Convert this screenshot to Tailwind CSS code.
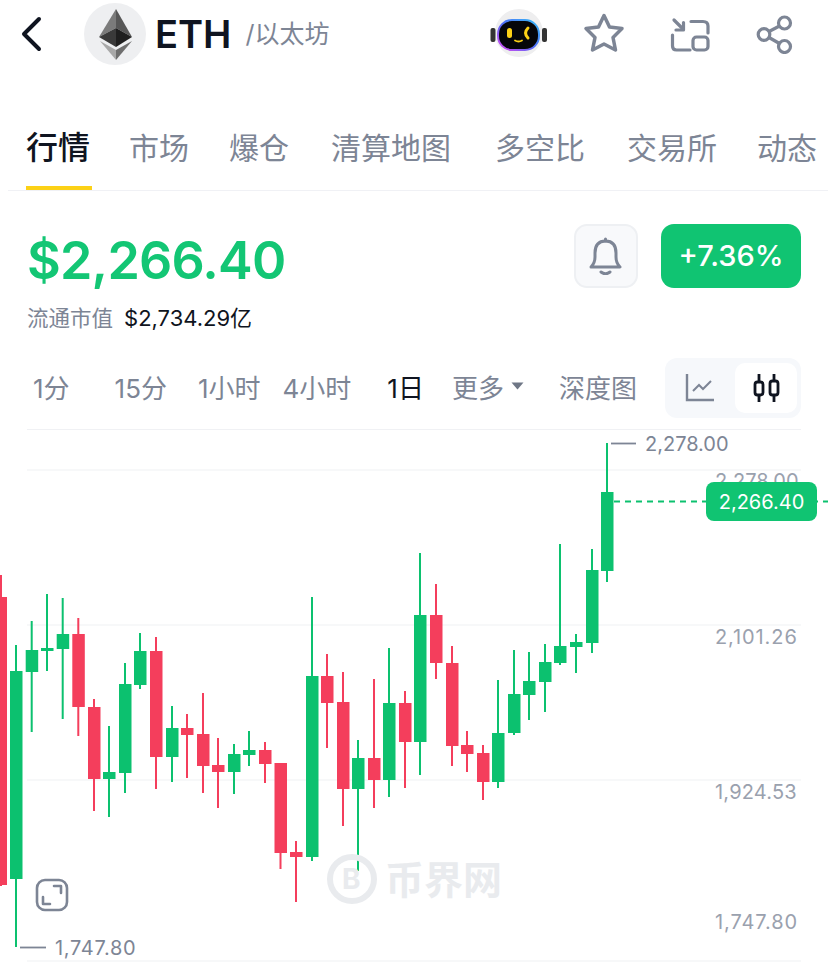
<!DOCTYPE html>
<html lang="zh">
<head>
<meta charset="utf-8">
<script src="https://cdn.jsdelivr.net/npm/@tailwindcss/browser@4"></script>
</head>
<body class="m-0 bg-white">
<div class="w-[828px] h-[967px] overflow-hidden bg-white font-['Inter','Noto_Sans_CJK_SC',sans-serif]">

  <!-- header -->
  <header class="h-[68px] flex items-center">
    <svg class="ml-[18px] w-[26px] h-[36px]" viewBox="0 0 26 36" fill="none" stroke="#0f1420" stroke-width="4" stroke-linecap="round" stroke-linejoin="round"><path d="M21 3 L6 18 L21 33"/></svg>
    <svg class="ml-[40px] w-[62px] h-[62px]" viewBox="84 3 62 62">
      <circle cx="115" cy="34" r="31" fill="#eeeff1"/>
      <path d="M116 9 L99 37 L116 28Z" fill="#7b7b7b"/>
      <path d="M116 9 L132 37 L116 28Z" fill="#575757"/>
      <path d="M99 37 L116 28 L116 47Z" fill="#3a3a3a"/>
      <path d="M132 37 L116 28 L116 47Z" fill="#1f1f1f"/>
      <path d="M100 41 L116 50 L116 60Z" fill="#a8a8a8"/>
      <path d="M132 41 L116 50 L116 60Z" fill="#6e6e6e"/>
    </svg>
    <span class="ml-[9px] text-[38px] leading-none font-semibold text-[#0f1420]">ETH</span>
    <span class="ml-[14px] text-[25px] leading-none text-[#7d8595]">/以太坊</span>
    <svg class="ml-[161px] w-[58px] h-[50px]" viewBox="491 9 58 50">
      <circle cx="520" cy="33" r="24" fill="#eeeeef"/>
      <rect x="491.500" y="28" width="5" height="14" rx="2" fill="#333"/>
      <rect x="543" y="28" width="5" height="14" rx="2" fill="#333"/>
      <defs><linearGradient id="rb" x1="1" y1="0" x2="0" y2="1"><stop offset="0" stop-color="#38bdf8"/><stop offset="0.5" stop-color="#4f6df5"/><stop offset="1" stop-color="#d946ef"/></linearGradient></defs>
      <rect x="499" y="20" width="41" height="30" rx="14" fill="#05060a" stroke="url(#rb)" stroke-width="2"/>
      <rect x="508" y="28" width="5" height="10" rx="2.500" fill="#fcd116"/>
      <path d="M529 28 Q524 33 529 38" fill="none" stroke="#fcd116" stroke-width="3" stroke-linecap="round"/>
      <path d="M516 40.500 Q519.500 42.500 523 40.500" fill="none" stroke="#fcd116" stroke-width="1.800" stroke-linecap="round"/>
    </svg>
    <svg class="ml-[35px] w-[42px] h-[42px]" viewBox="584 14 42 42" fill="none" stroke="#7d8595" stroke-width="3.500" stroke-linejoin="round"><path d="M605 16.500 L610.500 28 L623 29.500 L614 38.500 L616.500 51 L605 45 L593.500 51 L596 38.500 L587 29.500 L599.500 28Z"/></svg>
    <svg class="ml-[44px] w-[42px] h-[38px]" viewBox="668 15 42 38" fill="none" stroke="#7d8595" stroke-width="3.200" stroke-linecap="round" stroke-linejoin="round">
      <path d="M673 20 L682 29"/><path d="M682.500 22.500 V30 H675"/>
      <path d="M671.500 35 V46 Q671.500 50 675.500 50 H689"/>
      <path d="M690 21.500 H702 Q707 21.500 707 26 V33"/>
      <rect x="692" y="37" width="15" height="13" rx="3.500"/>
    </svg>
    <svg class="ml-[45px] w-[38px] h-[40px]" viewBox="755 14 38 40" fill="none" stroke="#7d8595" stroke-width="3.200">
      <circle cx="783.500" cy="23" r="6"/><circle cx="763" cy="34.500" r="5.800"/><circle cx="783.500" cy="46.500" r="6"/>
      <path d="M768 31.500 L778.500 26"/><path d="M768 37.500 L778.500 43.500"/>
    </svg>
  </header>

  <!-- tabs -->
  <nav class="ml-[8px] h-[123px] border-b border-[#f0f1f5] flex items-start pt-[59px] pl-[18px] text-[#7d8595] text-[30px] leading-[42px] whitespace-nowrap relative">
    <span class="relative w-[66px] h-[63px] font-medium text-[32px] text-[#0f1420]">行情<i class="absolute left-0 bottom-0 w-[66px] h-[4px] bg-[#fcd116]"></i></span>
    <span class="ml-[37px]">市场</span>
    <span class="ml-[40px]">爆仓</span>
    <span class="ml-[42px]">清算地图</span>
    <span class="ml-[44px]">多空比</span>
    <span class="ml-[42px]">交易所</span>
    <span class="ml-[40px]">动态</span>
  </nav>

  <!-- price -->
  <section class="pl-[27px] pr-[27px] flex justify-between">
    <div>
      <div class="mt-[39px] text-[52px] leading-[62px] font-semibold text-[#13c674] tracking-[-0.8px]">$2,266.40</div>
      <div class="mt-[11px] flex items-center leading-[30px]">
        <span class="text-[21.500px] text-[#7d8595]">流通市值</span>
        <span class="ml-[11px] text-[22px] text-[#0f1420]">$2,734.29亿</span>
      </div>
    </div>
    <div class="mt-[33px] flex items-start gap-[23px]">
      <div class="w-[64px] h-[64px] rounded-[13px] bg-[#f8f9fb] border-2 border-[#eef0f3] flex items-center justify-center">
        <svg class="w-[36px] h-[38px]" viewBox="590 238 36 38" fill="none" stroke="#7d8595" stroke-width="3" stroke-linejoin="round"><path d="M593 268 Q597 264 597 258 V254 Q597 242 607.500 242 Q618 242 618 254 V258 Q618 264 622 268Z"/><path d="M607.500 242 V240" stroke-linecap="round"/><path d="M603 273 Q607.500 276.500 612 273" stroke-linecap="round"/></svg>
      </div>
      <div class="w-[140px] h-[64px] rounded-[13px] bg-[#10c472] text-white text-[29px] font-medium flex items-center justify-center">+7.36%</div>
    </div>
  </section>

  <!-- intervals -->
  <section class="mt-[25px] h-[60px] ml-[27px] mr-[27px] flex items-center text-[26px] text-[#7d8595] whitespace-nowrap relative">
    <span class="ml-[6px]">1分</span>
    <span class="ml-[45px]">15分</span>
    <span class="ml-[31px]">1小时</span>
    <span class="ml-[22px]">4小时</span>
    <span class="ml-[36px] text-[#0f1420]">1日</span>
    <span class="ml-[28px]">更多</span>
    <svg class="ml-[7px] w-[13px] h-[8px] mb-[4px]" viewBox="0 0 13 8"><path d="M0.500 0.500 H12.500 L6.500 7.500Z" fill="#6f7786"/></svg>
    <span class="ml-[35px]">深度图</span>
    <div class="ml-auto w-[136px] h-[60px] rounded-[12px] bg-[#f6f8fb] flex items-center p-[5px] pr-[4px] justify-between">
      <svg class="ml-[15px] w-[30px] h-[30px]" viewBox="685 374 30 30" fill="none" stroke="#7d8595" stroke-width="2.400"><path d="M687 375 V401 H714"/><path d="M693 392 L699 386 L703 390 L711 382" stroke-width="2"/></svg>
      <div class="w-[62px] h-[50px] rounded-[10px] bg-white flex items-center justify-center">
        <svg class="w-[28px] h-[30px]" viewBox="752 373 28 30" fill="none" stroke="#0f1420" stroke-width="2.800" stroke-linejoin="round"><path d="M759 374 V382"/><path d="M759 395 V402"/><rect x="755" y="382" width="8" height="13" rx="2.500"/><path d="M774 374 V381"/><path d="M774 395 V402"/><rect x="770" y="381" width="8" height="14" rx="2.500"/></svg>
      </div>
    </div>
  </section>

  <!-- chart -->
  <section class="relative mt-[11px] h-[538px] border-0">
    <svg class="absolute left-0 top-0 w-[828px] h-[538px]" viewBox="0 429 828 538" fill="none">
      <g stroke="#f0f1f4" stroke-width="1.200"><path d="M27 429.500 H801"/><path d="M27 470 H801"/><path d="M27 625 H801"/><path d="M27 780 H801"/><path d="M27 961 H801"/></g>
      <!-- red wicks -->
      <path stroke="#f43e5c" stroke-width="2" d="M1 575V886 M78.300 618V736 M94 699V811 M156 637V789 M187 714V778 M203 693V793 M218 738V808 M265 742V783 M280.500 763V869 M296 841V902 M327 654V748 M343 672V826 M374 679V808 M405 691V788 M436 584V679 M452 646V766 M467 731V772 M483 745V800"/>
      <!-- green wicks -->
      <path stroke="#0cc16f" stroke-width="2" d="M16 645V947 M31.700 621V732 M47 594V671 M62.700 598V719 M109 726V817 M125 663V793 M140 633V689 M172 706V782 M234 744V794 M249 731V766 M312 597V861 M358 740V871 M389 648V797 M420 553V775 M498 680V788 M514 650V735 M529 652V720 M545 644V712 M560 544V665 M576 634V673 M592 549V653 M607 443V582"/>
      <g fill="#f43e5c">
        <rect x="-5" y="597" width="12" height="288"/><rect x="72.300" y="634" width="12.500" height="73"/><rect x="88" y="707" width="12.500" height="72"/><rect x="150" y="651" width="12.500" height="106"/><rect x="181" y="728" width="12.500" height="7"/><rect x="197" y="734" width="12.500" height="32"/><rect x="212" y="765" width="12.500" height="7"/><rect x="259" y="750" width="12.500" height="14"/><rect x="274.500" y="763" width="12.500" height="90"/><rect x="290" y="852" width="12.500" height="5"/><rect x="321" y="676" width="12.500" height="27"/><rect x="337" y="702" width="12.500" height="87"/><rect x="368" y="758" width="12.500" height="22"/><rect x="399" y="703" width="12.500" height="39"/><rect x="430" y="615" width="12.500" height="48"/><rect x="446" y="663" width="12.500" height="83"/><rect x="461" y="745" width="12.500" height="9"/><rect x="477" y="753" width="12.500" height="29"/>
      </g>
      <g fill="#0cc16f">
        <rect x="10" y="671" width="12.500" height="208"/><rect x="25.700" y="650" width="12.500" height="22"/><rect x="41" y="648" width="12.500" height="3"/><rect x="56.700" y="634" width="12.500" height="15"/><rect x="103" y="772" width="12.500" height="7"/><rect x="119" y="684" width="12.500" height="89"/><rect x="134" y="651" width="12.500" height="34"/><rect x="166" y="728" width="12.500" height="29"/><rect x="228" y="754" width="12.500" height="18"/><rect x="243" y="750" width="12.500" height="5"/><rect x="306" y="676" width="12.500" height="181"/><rect x="352" y="758" width="12.500" height="31"/><rect x="383" y="703" width="12.500" height="77"/><rect x="414" y="615" width="12.500" height="127"/><rect x="492" y="733" width="12.500" height="49"/><rect x="508" y="694" width="12.500" height="39"/><rect x="523" y="681" width="12.500" height="14"/><rect x="539" y="662" width="12.500" height="20"/><rect x="554" y="646" width="12.500" height="17"/><rect x="570" y="642" width="12.500" height="5"/><rect x="586" y="570" width="12.500" height="73"/><rect x="601" y="492" width="12.500" height="79"/>
      </g>
      <path d="M614 501.500 H828" stroke="#0cc16f" stroke-width="2" stroke-dasharray="6 5"/>
      <path d="M611 443.500 H636" stroke="#7d8595" stroke-width="1.800"/>
      <path d="M20 947.500 H46" stroke="#7d8595" stroke-width="1.800"/>
      <!-- watermark mark -->
      <circle cx="352" cy="879" r="22" stroke="#e9ebee" stroke-width="6"/>
    </svg>

    <span class="absolute left-[342px] top-[434px] text-[28px] leading-[32px] font-bold text-[#e9ebee]">B</span>
    <span class="absolute left-[385px] top-[428px] text-[39px] leading-[46px] font-bold text-[#e9ebee] whitespace-nowrap">币界网</span>

    <span class="absolute left-[645px] top-[2px] text-[20px] leading-[26px] text-[#7d8595]">2,278.00</span>
    <span class="absolute left-[55px] top-[506px] text-[20px] leading-[26px] text-[#7d8595] tracking-[0.7px]">1,747.80</span>
    <span class="absolute left-[715px] top-[39px] text-[20px] leading-[26px] text-[#9aa1ae]">2,278.00</span>
    <span class="absolute left-[715px] top-[195px] text-[20px] leading-[26px] text-[#9aa1ae] tracking-[0.9px]">2,101.26</span>
    <span class="absolute left-[715px] top-[350px] text-[20px] leading-[26px] text-[#9aa1ae] tracking-[0.2px]">1,924.53</span>
    <span class="absolute left-[715px] top-[480px] text-[20px] leading-[26px] text-[#9aa1ae] tracking-[0.9px]">1,747.80</span>

    <div class="absolute left-[706px] top-[53px] w-[111px] h-[39px] rounded-[8px] bg-[#10c472] text-white text-[20px] flex items-center justify-center">2,266.40</div>

    <svg class="absolute left-[35px] top-[449px] w-[34px] h-[34px]" viewBox="0 0 34 34" fill="none" stroke="#7d8595" stroke-width="2.600" stroke-linecap="round" stroke-linejoin="round"><rect x="2" y="2" width="30" height="30" rx="8"/><path d="M19 8 H26 V15"/><path d="M8 19 V26 H15"/></svg>
  </section>
</div>
</body>
</html>
